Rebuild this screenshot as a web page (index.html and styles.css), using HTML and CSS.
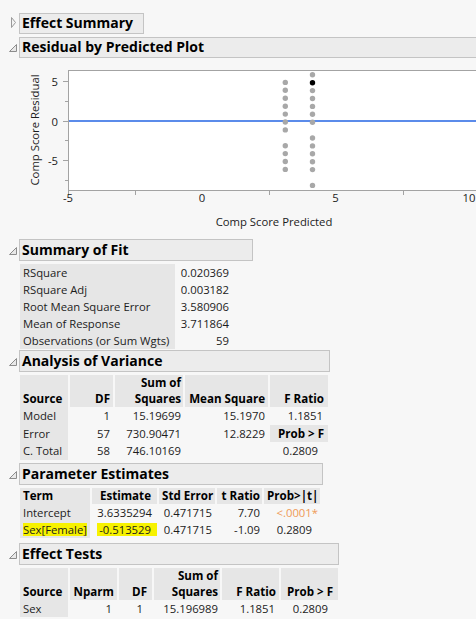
FILE: index.html
```html
<!DOCTYPE html>
<html>
<head>
<meta charset="utf-8">
<link rel="stylesheet" href="styles.css">
</head>
<body>
<div class="report">
  <div class="node node-top">
    <svg class="tri" width="19" height="21" viewBox="0 0 19 21"><polygon points="11.5,4.5 15.5,9.5 11.5,14.5" class="tri-closed"/></svg>
    <div class="hdr w-es">Effect Summary</div>
  </div>
  <div class="node node-top">
    <svg class="tri" width="19" height="21" viewBox="0 0 19 21"><polygon points="16.5,7.5 16.5,14.5 9.5,14.5" class="tri-open"/></svg>
    <div class="hdr w-full">Residual by Predicted Plot</div>
  </div>

  <svg class="plot" width="476" height="181" viewBox="0 0 476 181">
    <rect x="68.5" y="12.5" width="420" height="120" class="frame"/>
    <g class="ticks">
      <line x1="63" y1="23.5" x2="68" y2="23.5"/>
      <line x1="65" y1="43.5" x2="68" y2="43.5"/>
      <line x1="63" y1="63.5" x2="68" y2="63.5"/>
      <line x1="65" y1="82.5" x2="68" y2="82.5"/>
      <line x1="63" y1="102.5" x2="68" y2="102.5"/>
      <line x1="65" y1="122.5" x2="68" y2="122.5"/>
      <line x1="68.5" y1="132" x2="68.5" y2="137"/>
      <line x1="135.5" y1="132" x2="135.5" y2="137"/>
      <line x1="269.5" y1="132" x2="269.5" y2="137"/>
      <line x1="403.5" y1="132" x2="403.5" y2="137"/>
    </g>
    <line x1="69" y1="63" x2="476" y2="63" class="zero"/>
    <g class="dots">
      <circle cx="285.3" cy="24.4" r="2.7"/>
      <circle cx="285.3" cy="32.3" r="2.7"/>
      <circle cx="285.3" cy="40.2" r="2.7"/>
      <circle cx="285.3" cy="48.2" r="2.7"/>
      <circle cx="285.3" cy="56.1" r="2.7"/>
      <circle cx="285.3" cy="64" r="2.7"/>
      <circle cx="285.3" cy="71.9" r="2.7"/>
      <circle cx="285.3" cy="87.7" r="2.7"/>
      <circle cx="285.3" cy="95.6" r="2.7"/>
      <circle cx="285.3" cy="103.5" r="2.7"/>
      <circle cx="285.3" cy="111.4" r="2.7"/>
      <circle cx="312.5" cy="16.8" r="2.7"/>
      <circle cx="312.5" cy="32.6" r="2.7"/>
      <circle cx="312.5" cy="40.5" r="2.7"/>
      <circle cx="312.5" cy="48.4" r="2.7"/>
      <circle cx="312.5" cy="56.3" r="2.7"/>
      <circle cx="312.5" cy="64.2" r="2.7"/>
      <circle cx="312.5" cy="80" r="2.7"/>
      <circle cx="312.5" cy="87.9" r="2.7"/>
      <circle cx="312.5" cy="95.8" r="2.7"/>
      <circle cx="312.5" cy="103.7" r="2.7"/>
      <circle cx="312.5" cy="111.6" r="2.7"/>
      <circle cx="312.5" cy="127.4" r="2.7"/>
    </g>
    <circle cx="312.5" cy="24.7" r="2.7" class="sel"/>
    <g class="lbl-y">
      <text x="58" y="28">5</text>
      <text x="58" y="67.5">0</text>
      <text x="58" y="107">-5</text>
    </g>
    <g class="lbl-x">
      <text x="68" y="144">-5</text>
      <text x="202" y="144">0</text>
      <text x="335.5" y="144">5</text>
      <text x="469" y="144">10</text>
    </g>
    <text class="title" x="274" y="167.5">Comp Score Predicted</text>
    <text class="title" transform="translate(38.5,72) rotate(-90)">Comp Score Residual</text>
  </svg>

  <div class="node">
    <svg class="tri" width="19" height="22" viewBox="0 0 19 22"><polygon points="16.5,8.5 16.5,15.5 9.5,15.5" class="tri-open"/></svg>
    <div class="hdr w-fit">Summary of Fit</div>
  </div>
  <div class="grid fit">
    <div class="lab">RSquare</div><div class="num">0.020369</div>
    <div class="lab">RSquare Adj</div><div class="num">0.003182</div>
    <div class="lab">Root Mean Square Error</div><div class="num">3.580906</div>
    <div class="lab">Mean of Response</div><div class="num">3.711864</div>
    <div class="lab">Observations (or Sum Wgts)</div><div class="num">59</div>
  </div>

  <div class="node">
    <svg class="tri" width="19" height="22" viewBox="0 0 19 22"><polygon points="16.5,8.5 16.5,15.5 9.5,15.5" class="tri-open"/></svg>
    <div class="hdr w-anova">Analysis of Variance</div>
  </div>
  <div class="grid anova">
    <div class="th left">Source</div><div class="th">DF</div><div class="th pr2">Sum of<br>Squares</div><div class="th">Mean Square</div><div class="th pr4">F Ratio</div>
    <div class="lab">Model</div><div class="num">1</div><div class="num pr2">15.19699</div><div class="num">15.1970</div><div class="num pr5">1.1851</div>
    <div class="lab">Error</div><div class="num">57</div><div class="num pr2">730.90471</div><div class="num">12.8229</div><div class="th th-in pr4">Prob &gt; F</div>
    <div class="lab">C. Total</div><div class="num">58</div><div class="num pr2">746.10169</div><div class="num"></div><div class="num pr10">0.2809</div>
  </div>

  <div class="node">
    <svg class="tri" width="19" height="22" viewBox="0 0 19 22"><polygon points="16.5,8.5 16.5,15.5 9.5,15.5" class="tri-open"/></svg>
    <div class="hdr w-pe">Parameter Estimates</div>
  </div>
  <div class="grid pe">
    <div class="th left">Term</div><div class="th pr6">Estimate</div><div class="th">Std Error</div><div class="th pr2">t Ratio</div><div class="th">Prob&gt;|t|</div>
    <div class="lab">Intercept</div><div class="num pr5">3.6335294</div><div class="num">0.471715</div><div class="num pr2">7.70</div><div class="num pr2 sig">&lt;.0001*</div>
    <div class="lab"><span class="hl">Sex[Female]</span></div><div class="num pr0"><span class="hl hl-num">-0.513529</span></div><div class="num">0.471715</div><div class="num pr2">-1.09</div><div class="num pr8">0.2809</div>
  </div>

  <div class="node">
    <svg class="tri" width="19" height="22" viewBox="0 0 19 22"><polygon points="16.5,8.5 16.5,15.5 9.5,15.5" class="tri-open"/></svg>
    <div class="hdr w-et">Effect Tests</div>
  </div>
  <div class="grid et">
    <div class="th left">Source</div><div class="th">Nparm</div><div class="th pr5">DF</div><div class="th pr2">Sum of<br>Squares</div><div class="th">F Ratio</div><div class="th pr5">Prob &gt; F</div>
    <div class="lab">Sex</div><div class="num pr5">1</div><div class="num pr9">1</div><div class="num pr2">15.196989</div><div class="num pr4">1.1851</div><div class="num pr10">0.2809</div>
  </div>
</div>
</body>
</html>
```

FILE: styles.css
```css
body {
  margin: 0;
  background: #f7f7f7;
  font-family: "Open Sans", "Noto Sans", sans-serif;
  font-size: 11.3px;
  color: #1c1c1c;
}

.report {
  padding-top: 13px;
  overflow: hidden;
}

.node {
  display: flex;
  align-items: flex-start;
  height: 22px;
  margin-bottom: 3px;
}

.node-top {
  height: 21px;
}

.tri {
  display: block;
  flex: none;
}

.tri-closed {
  fill: #f4f4f4;
  stroke: #9a9a9a;
  stroke-width: 1;
}

.tri-open {
  fill: #e8e8e8;
  stroke: #8c8c8c;
  stroke-width: 1;
}

.hdr {
  box-sizing: border-box;
  height: 100%;
  border: 1px solid #c4c4c4;
  background: #ececec;
  color: #000;
  font-weight: bold;
  font-size: 14px;
  line-height: 18px;
  padding-left: 2px;
  white-space: nowrap;
  flex: none;
}

.node:not(.node-top) .hdr {
  line-height: 19px;
}

.w-es { width: 125px; }
.w-full { width: 470px; }
.w-fit { width: 234px; }
.w-anova { width: 311px; }
.w-pe { width: 304px; }
.w-et { width: 320px; }

.plot {
  display: block;
  margin-top: -3px;
}

.frame {
  fill: #ffffff;
  stroke: #a3a3a3;
  stroke-width: 1;
}

.ticks line {
  stroke: #a3a3a3;
  stroke-width: 1;
}

.zero {
  stroke: #5b8bea;
  stroke-width: 2;
}

.dots circle {
  fill: #a8a8a8;
}

.sel {
  fill: #000;
}

.plot text {
  font-family: "Open Sans", "Noto Sans", sans-serif;
  font-size: 11.3px;
  fill: #1c1c1c;
}

.lbl-y text {
  text-anchor: end;
}

.lbl-x text,
.plot .title {
  text-anchor: middle;
}

.grid {
  display: grid;
  margin-left: 20px;
  column-gap: 2px;
}

.fit {
  grid-template-columns: 155px 57px;
  grid-auto-rows: 17px;
  column-gap: 0;
  margin-bottom: 1px;
}

.anova {
  grid-template-columns: 48px 43px 68px 83px 58px;
  grid-template-rows: 32px 17.5px 17.5px 17.5px;
  margin-bottom: 3.5px;
}

.pe {
  grid-template-columns: 70px 65px 56px 45px 56px;
  grid-template-rows: 16px 17px 17px;
  margin-bottom: 5px;
}

.et {
  grid-template-columns: 48px 47px 33px 66px 57px 57px;
  grid-template-rows: 32px 17px;
}

.grid > div {
  white-space: nowrap;
  line-height: 17px;
  padding: 0 3px;
}

.lab {
  background: #e6e6e6;
  text-align: left;
}

.num {
  text-align: right;
}

.th {
  background: #e6e6e6;
  font-weight: bold;
  font-size: 11.6px;
  color: #000;
  text-align: right;
  display: flex;
  flex-direction: column;
  justify-content: flex-end;
}

.grid > .th {
  line-height: 16px;
}

.th.left {
  text-align: left;
}

.grid > .th-in {
  line-height: 17px;
}

.grid > .pr0 { padding-right: 0; }
.grid > .pr2 { padding-right: 2px; }
.grid > .pr4 { padding-right: 4px; }
.grid > .pr5 { padding-right: 5px; }
.grid > .pr6 { padding-right: 6px; }
.grid > .pr8 { padding-right: 8px; }
.grid > .pr9 { padding-right: 9px; }
.grid > .pr10 { padding-right: 10px; }

.sig {
  color: #ef9a56;
}

.hl {
  background: #f7f200;
}

.hl-num {
  display: inline-block;
  padding: 0 6px 0 2px;
  line-height: 13px;
}

.lab .hl {
  line-height: 13px;
  display: inline-block;
}
```
